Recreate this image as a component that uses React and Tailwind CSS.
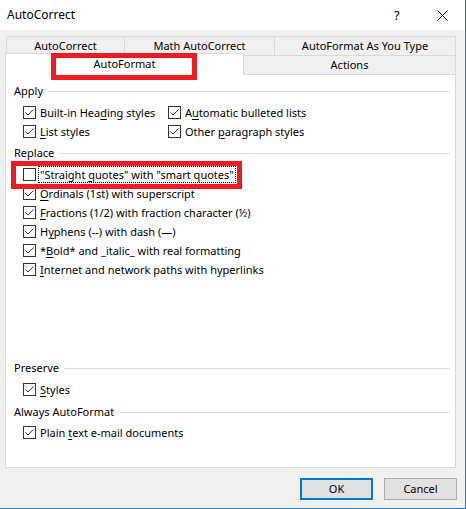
import React from "react";

const Check = ({ checked = true }) => (
  <svg width="13" height="13" viewBox="0 0 13 13" className="shrink-0">
    <rect x="0.5" y="0.5" width="12" height="12" fill="white" stroke="#333333" />
    {checked && (
      <path d="M2.5 6.5L5 9L10.5 3.5" fill="none" stroke="#333333" strokeWidth="1" />
    )}
  </svg>
);

const U = ({ children }) => <span className="underline underline-offset-2">{children}</span>;

const Row = ({ checked = true, focus = false, children, className = "" }) => (
  <div className={"h-[19px] flex items-center gap-[2px] " + className}>
    <Check checked={checked} />
    <span
      className={
        (focus ? "border-dotted border-black" : "border-transparent") +
        " border px-px leading-[15px] whitespace-nowrap"
      }
    >
      {children}
    </span>
  </div>
);

const Section = ({ children, className = "" }) => (
  <div className={"h-[19px] flex items-center pl-[8px] pr-[5px] gap-[5px] " + className}>
    <span className="whitespace-nowrap">{children}</span>
    <div className="flex-1 h-px bg-[#dcdcdc]" />
  </div>
);

export default function App() {
  return (
    <div className="relative w-[466px] h-[509px] bg-[#f0f0f0] border-r border-b border-[#1883d7] font-['Noto_Sans',sans-serif] text-[11px] text-black overflow-hidden">
      {/* title bar */}
      <div className="h-[30px] bg-white flex items-center">
        <div className="flex-1 pl-[7px] text-[12px]">AutoCorrect</div>
        <div className="w-[8px] text-[13px] leading-none">?</div>
        <svg width="11" height="11" viewBox="0 0 11 11" className="ml-[35px] mr-[17px]">
          <path d="M0.5 0.5L10.5 10.5M10.5 0.5L0.5 10.5" stroke="#000" strokeWidth="1" />
        </svg>
      </div>

      {/* tabs + panel */}
      <div className="pl-[5px] mt-[6px] w-[456px]">
        <div className="flex ml-[1px] h-[19px]">
          <div className="w-[119px] border-t border-l border-r border-[#d9d9d9] flex items-center justify-center">AutoCorrect</div>
          <div className="w-[150px] border-t border-r border-[#d9d9d9] flex items-center justify-center">Math AutoCorrect</div>
          <div className="w-[181px] border-t border-r border-[#d9d9d9] flex items-center justify-center">AutoFormat As You Type</div>
        </div>
        <div className="flex items-end -mt-[2px] h-[21px]">
          <div className="relative z-10 w-[239px] h-[22px] -mb-[1px] bg-white border-t border-l border-r border-[#d9d9d9] flex items-center justify-center">
            AutoFormat
          </div>
          <div className="flex-1 h-[19px] border-t border-r border-[#d9d9d9] flex items-center justify-center">
            Actions
          </div>
        </div>
        <div className="h-[394px] bg-white border border-[#d9d9d9] pt-[7px]">
          <Section>Apply</Section>
          <div className="grid grid-cols-[145px_1fr] pl-[17px] mt-[2px]">
            <Row>Built-in Hea<U>d</U>ing styles</Row>
            <Row>A<U>u</U>tomatic bulleted lists</Row>
            <Row><U>L</U>ist styles</Row>
            <Row>Other <U>p</U>aragraph styles</Row>
          </div>
          <Section className="mt-[3px]">Replace</Section>
          <div className="pl-[17px] mt-[2px]">
            <Row checked={false} focus>"Straight <U>q</U>uotes" with "smart quotes"</Row>
            <Row><U>O</U>rdinals (1st) with superscript</Row>
            <Row><U>F</U>ractions (1/2) with fraction character (½)</Row>
            <Row>H<U>y</U>phens (--) with dash (—)</Row>
            <Row>*<U>B</U>old* and _italic_ with real formatting</Row>
            <Row><U>I</U>nternet and network paths with hyperlinks</Row>
          </div>
          <Section className="mt-[80px]">Preserve</Section>
          <div className="pl-[17px] mt-[2px]">
            <Row><U>S</U>tyles</Row>
          </div>
          <Section className="mt-[4px]">Always AutoFormat</Section>
          <div className="pl-[17px] mt-[1px]">
            <Row>Plain <U>t</U>ext e-mail documents</Row>
          </div>
        </div>
      </div>

      {/* buttons */}
      <div className="flex justify-end gap-[11px] pr-[8px] mt-[10px]">
        <button className="w-[73px] h-[22px] bg-[#e1e1e1] border-2 border-[#0078d7] flex items-center justify-center">OK</button>
        <button className="w-[73px] h-[22px] bg-[#e1e1e1] border border-[#adadad] flex items-center justify-center">Cancel</button>
      </div>

      {/* red annotation boxes */}
      <div className="absolute z-20 left-[51px] top-[53px] w-[146px] h-[27px] border-[5px] border-[#ed1c24] pointer-events-none" />
      <div className="absolute z-20 left-[11px] top-[161px] w-[231px] h-[28px] border-[5px] border-[#ed1c24] pointer-events-none" />
    </div>
  );
}
